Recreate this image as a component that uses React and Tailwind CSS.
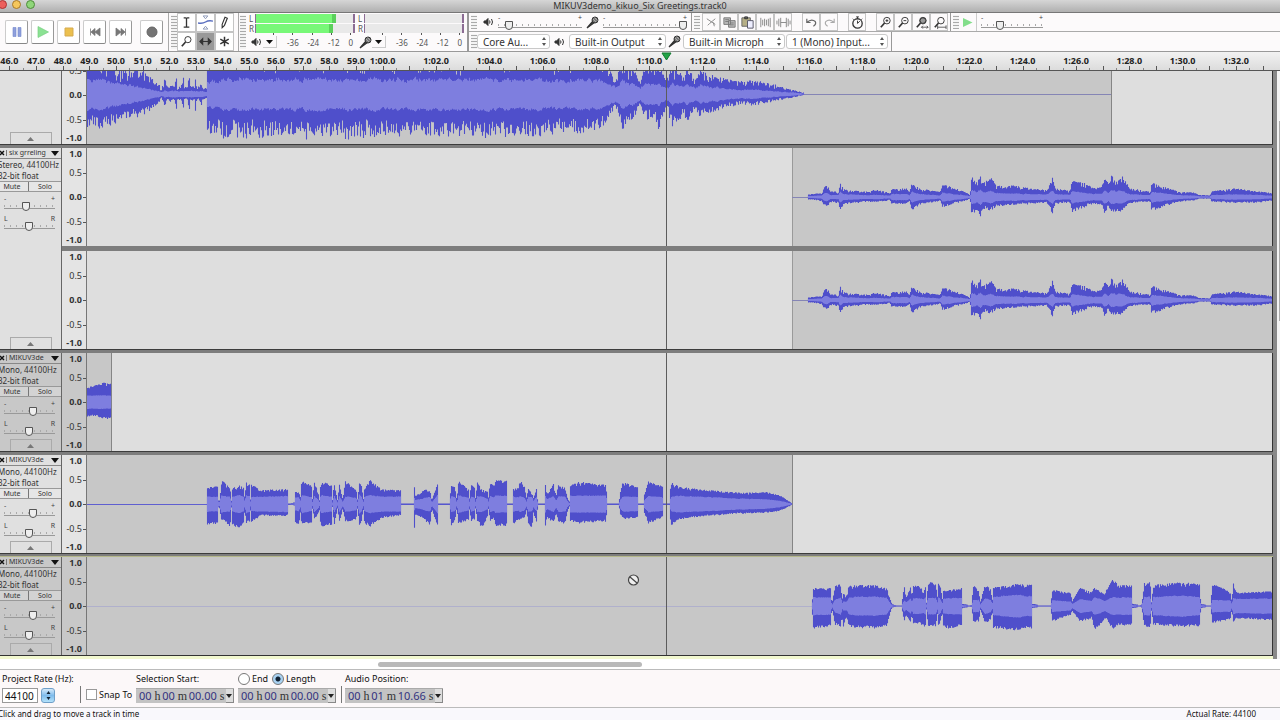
import React, { useState } from 'react';

const PLAYHEAD = 579;

// [x, peak above zero, peak below zero, rms], all in thirds of a pixel
const MUSIC = [
  [84, 8, 8], [125, 12, 14], [132, 30, 30], [142, 36, 36], [150, 17, 17], [175, 17, 20], [180, 46, 46],
  [190, 25, 27], [210, 20, 20], [270, 16, 17], [285, 24, 17], [330, 12, 12], [335, 24, 24], [380, 27, 25],
  [388, 16, 14], [395, 40, 45], [420, 26, 25], [480, 15, 14], [487, 40, 33], [510, 32, 26], [560, 13, 11],
  [570, 6, 6], [575, 63, 63], [590, 43, 47], [601, 63, 62], [610, 42, 38], [632, 60, 46], [650, 34, 32],
  [700, 35, 27], [760, 25, 22], [800, 22, 20], [817, 58, 56], [825, 27, 25], [870, 19, 17], [875, 48, 52],
  [910, 44, 36], [940, 27, 22], [965, 30, 27], [972, 63, 58], [985, 40, 34], [995, 68, 52], [1010, 50, 50],
  [1027, 62, 46], [1050, 27, 21], [1110, 17, 15], [1115, 44, 47], [1160, 28, 28], [1200, 16, 16],
  [1240, 14, 12], [1260, 6, 6], [1290, 5, 5], [1295, 17, 17], [1365, 27, 20], [1430, 17, 19], [1478, 13, 13],
];

const VOCAL_A = [
  [20, 5, 5], [22, 50, 65, 25], [52, 54, 65, 24], [54, 10, 10, 8], [60, 12, 15], [62, 62, 52, 30],
  [66, 72, 50], [90, 47, 73, 25], [94, 10, 12], [97, 47, 67], [118, 58, 77, 30], [130, 50, 62],
  [134, 15, 20], [138, 69, 60, 30], [148, 59, 54], [151, 15, 20], [154, 60, 57, 22], [180, 42, 38, 25],
  [262, 45, 38, 27], [264, 0, 0], [283, 5, 5], [285, 37, 60, 20], [297, 40, 70], [300, 12, 20],
  [305, 72, 65, 30], [335, 54, 60, 22], [337, 15, 15], [343, 70, 49], [355, 30, 30], [358, 12, 20],
  [362, 70, 75, 30], [395, 56, 66, 25], [397, 12, 10], [402, 62, 70], [412, 12, 15], [418, 59, 60],
  [428, 15, 15], [436, 70, 54, 25], [468, 44, 54], [472, 15, 15], [478, 65, 70, 30], [486, 50, 50],
  [489, 5, 5], [493, 45, 60], [510, 72, 72, 30], [545, 44, 44, 25], [601, 42, 37, 25], [603, 0, 0],
  [640, 0, 0], [643, 52, 77, 20], [646, 25, 35], [675, 44, 50], [690, 39, 71], [695, 12, 15],
  [712, 60, 71], [714, 0, 0], [749, 0, 0], [752, 54, 71], [765, 52, 55], [770, 10, 10], [775, 70, 65],
  [805, 44, 49], [809, 8, 8], [812, 60, 55], [823, 49, 49], [825, 10, 10], [832, 65, 54], [845, 44, 76],
  [862, 38, 44], [864, 10, 10], [870, 65, 54], [882, 54, 44], [886, 72, 70, 28], [920, 70, 70, 28],
  [922, 0, 0], [937, 0, 0], [940, 49, 65], [955, 49, 49], [960, 73, 49], [975, 49, 44], [978, 15, 15],
  [985, 49, 65], [996, 30, 75], [1000, 20, 30], [1010, 48, 60], [1013, 0, 0], [1033, 0, 0],
  [1035, 65, 75], [1040, 30, 42], [1060, 60, 60], [1068, 25, 30], [1075, 60, 54], [1095, 48, 65],
  [1103, 15, 20], [1108, 8, 8], [1110, 55, 55, 28], [1135, 68, 61, 28], [1218, 57, 55, 28], [1221, 0, 0],
  [1257, 0, 0], [1259, 30, 30], [1268, 68, 48, 25], [1312, 51, 44, 24], [1314, 0, 0], [1331, 0, 0],
  [1333, 30, 30], [1345, 68, 62, 27], [1387, 53, 42, 22], [1389, 0, 0], [1408, 0, 0], [1412, 67, 68, 25],
  [1440, 52, 50, 28], [1500, 44, 39, 24], [1620, 34, 30, 18], [1700, 36, 28, 16], [1740, 26, 22], [1775, 3, 3],
];

const VOCAL_B = [
  [66, 5, 5], [69, 54, 73, 30], [122, 54, 65, 28], [125, 5, 5], [135, 60, 60, 22], [153, 67, 65],
  [156, 10, 15], [158, 42, 75, 15], [168, 30, 35], [172, 40, 45], [176, 62, 65, 28], [250, 64, 72, 33],
  [290, 54, 64, 28], [302, 15, 15], [306, 6, 6], [320, 1, 1], [334, 0, 0], [342, 65, 50, 20],
  [348, 25, 30], [362, 60, 55], [365, 30, 30], [370, 60, 55], [390, 62, 55], [400, 40, 65], [407, 65, 65],
  [409, 12, 12], [414, 73, 65, 28], [438, 67, 65, 28], [441, 15, 15], [445, 67, 65], [453, 54, 44],
  [456, 8, 8], [459, 46, 70, 25], [515, 54, 66, 28], [517, 7, 7], [532, 4, 4], [534, 0, 0], [544, 3, 3],
  [550, 63, 50, 20], [567, 44, 50], [570, 10, 10], [585, 65, 53], [603, 49, 44], [606, 8, 8],
  [610, 56, 70, 30], [675, 66, 78, 38], [724, 64, 69, 32], [727, 7, 7], [742, 4, 4], [745, 0, 0],
  [783, 0, 0], [785, 50, 50, 20], [842, 39, 28], [846, 15, 15], [870, 55, 50], [905, 42, 39],
  [912, 55, 75], [930, 44, 60], [945, 34, 39], [950, 54, 44], [968, 80, 75, 30], [985, 66, 60],
  [1024, 62, 62, 30], [1027, 7, 7], [1043, 4, 4], [1046, 0, 0], [1055, 5, 5], [1062, 70, 65, 30],
  [1080, 75, 70], [1084, 12, 15], [1090, 64, 59, 30], [1175, 72, 66, 35], [1228, 66, 64, 30],
  [1232, 7, 7], [1247, 4, 4], [1250, 0, 0], [1263, 0, 0], [1265, 67, 54, 20], [1320, 44, 44],
  [1325, 15, 15], [1330, 70, 50], [1340, 40, 40, 24], [1448, 45, 45, 25],
];

const NOTE = [[0, 44, 46, 22], [30, 52, 46, 22], [45, 60, 52, 22], [60, 56, 56, 22], [72, 55, 48, 22]];

const MIX = [
  [0, 105, 115, 60], [50, 95, 125, 58], [85, 85, 100, 48], [110, 75, 85, 40], [140, 70, 70, 28],
  [165, 75, 85, 30], [190, 50, 56, 20], [218, 28, 32, 12], [222, 8, 10, 8], [232, 50, 40, 14],
  [240, 26, 28, 12], [264, 24, 24, 12], [267, 70, 76, 12], [270, 22, 24, 12], [285, 28, 24, 12],
  [288, 70, 78, 12], [291, 22, 20, 12], [303, 26, 24, 12], [306, 70, 76, 12], [309, 24, 22, 12],
  [322, 24, 24, 12], [325, 68, 74, 12], [328, 24, 24, 12], [339, 24, 22, 12], [342, 60, 66, 12],
  [345, 24, 22, 12], [358, 16, 18, 9], [360, 110, 142, 52], [420, 112, 144, 60], [800, 108, 150, 60],
  [1000, 112, 140, 60], [1300, 112, 150, 60], [1500, 108, 130, 56], [1555, 100, 105, 48],
  [1585, 36, 46, 30], [1602, 92, 115, 50], [1640, 80, 84, 42], [1660, 36, 40, 24], [1676, 94, 96, 46],
  [1705, 80, 80, 40], [1716, 94, 146, 44], [1736, 40, 40, 20], [1756, 94, 115, 40], [1790, 54, 68, 30],
  [1800, 88, 100, 40], [1824, 42, 52, 26], [1840, 70, 78, 34], [1900, 50, 50, 24], [1950, 38, 38, 18],
  [2010, 42, 38, 18], [2060, 30, 27, 12], [2100, 17, 17, 8], [2150, 4, 4, 2],
];

function envelopeAt(points, x) {
  for (let i = 1; i < points.length; i++) {
    const a = points[i - 1];
    const b = points[i];
    if (x >= a[0] && x < b[0]) {
      const t = (x - a[0]) / (b[0] - a[0]);
      const rms = (p) => (p[3] === undefined ? (p[1] + p[2]) * 0.22 : p[3]);
      return [a[1] + (b[1] - a[1]) * t, a[2] + (b[2] - a[2]) * t, rms(a) + (rms(b) - rms(a)) * t];
    }
  }
  return null;
}

function buildWave(points, offset, zero, jitter) {
  let seed = 7;
  const random = () => {
    seed = (seed * 16807) % 2147483647;
    return seed / 2147483647;
  };
  let peaks = '';
  let rms = '';
  let swell = 0.5;
  const last = points[points.length - 1][0] / 3;
  for (let px = Math.floor(points[0][0] / 3); px < last; px++) {
    const env = envelopeAt(points, px * 3 + 1);
    if (!env) continue;
    swell = swell * 0.65 + random() * 0.35;
    const up = Math.max(0.5, (env[0] / 3) * (1 - jitter * random() * random()));
    const down = Math.max(0.5, (env[1] / 3) * (1 - jitter * (random() * 0.6 + swell * 0.4)));
    const mid = (env[2] / 3) * (1 - jitter * swell * 0.8);
    const midUp = Math.min(mid * (1 - jitter * 0.3 * random()), up);
    const midDown = Math.min(mid, down);
    const x = px + offset + 0.5;
    peaks += `M${x} ${(zero - up).toFixed(1)}V${(zero + down).toFixed(1)}`;
    rms += `M${x} ${(zero - midUp).toFixed(1)}V${(zero + midDown).toFixed(1)}`;
  }
  return { peaks, rms };
}

function Waveform({ points, offset = 0, zero = 49, jitter = 0.2, clip, line, lineColor = '#5f5fd0', children }) {
  const wave = buildWave(points, offset, zero, jitter);
  const [start, end] = clip;
  return (
    <svg className="block h-full w-full bg-[#dedede]" aria-hidden="true">
      <rect x={start} y="0" width={end ? end - start : '100%'} height="100%" fill="#c7c7c7" />
      {start > 0 && <path d={`M${start + 0.5} 0V98`} stroke="#9a9a9a" />}
      {end && <path d={`M${end + 0.5} 0V98`} stroke="#858585" />}
      {line && <path d={`M${line[0]} ${zero + 0.5}H${line[1]}`} stroke={lineColor} />}
      <path d={wave.peaks} stroke="#4f4fcb" strokeWidth="1.1" />
      <path d={wave.rms} stroke="#7e7edf" strokeWidth="1.1" />
      <path d={`M${PLAYHEAD + 0.5} 0V98`} stroke="#5c5c5c" />
      {children}
    </svg>
  );
}

const scale = [
  { text: '1.0', style: 'font-bold' },
  { text: '0.5', tick: true, style: 'mt-[7px]' },
  { text: '0.0', tick: true, style: 'mt-3 font-bold' },
  { text: '-0.5', tick: true, style: 'mt-[13px]' },
  { text: '-1.0', style: 'mt-1.5 font-bold' },
];

function VerticalRuler({ dark }) {
  return (
    <div className={`flex w-[25px] shrink-0 flex-col justify-end overflow-hidden border-r border-[#777] text-[9px] leading-3 text-[#333] ${dark ? 'bg-[#c8c8c8]' : 'bg-[#e4e4e4]'}`}>
      {scale.map((mark) => (
        <div key={mark.text} className={`flex h-3 shrink-0 items-center justify-end gap-px ${mark.style}`}>
          <span>{mark.text}</span>
          <span className={`h-px w-[3px] ${mark.tick ? 'bg-[#555]' : ''}`} />
        </div>
      ))}
    </div>
  );
}

function Slider({ label, value, left = '-', right = '+', className = '' }) {
  return (
    <label className={`block ${className}`}>
      <span className="flex h-1.5 justify-between text-[7px] leading-[6px] text-[#444]">
        <span>{left}</span>
        <span>{right}</span>
      </span>
      <input
        type="range"
        aria-label={label}
        defaultValue={value}
        className="block h-[9px] w-full appearance-none bg-[linear-gradient(#999,#999),repeating-linear-gradient(90deg,#aaa_0_1px,transparent_1px_6px)] bg-[length:100%_1px,100%_2px] bg-[position:0_6px,0_3px] bg-no-repeat [&::-webkit-slider-thumb]:h-[9px] [&::-webkit-slider-thumb]:w-2 [&::-webkit-slider-thumb]:appearance-none [&::-webkit-slider-thumb]:rounded-t-[3px] [&::-webkit-slider-thumb]:rounded-b-full [&::-webkit-slider-thumb]:border [&::-webkit-slider-thumb]:border-[#555] [&::-webkit-slider-thumb]:bg-[#eee]"
      />
    </label>
  );
}

function TrackPanel({ name, format, gain, dark }) {
  return (
    <div className={`flex w-[62px] shrink-0 flex-col overflow-hidden border-r border-[#666] text-[8px] text-[#333] ${dark ? 'bg-[#c8c8c8]' : 'bg-[#e0e0e0]'}`}>
      {name && (
        <>
          <div className="flex h-[11px] shrink-0 items-center border-b border-[#888] text-[7px] leading-[10px]">
            <button aria-label="Close track" className="w-[7px] shrink-0 border-r border-[#777] text-left text-[#111]">
              <svg width="5" height="6" viewBox="0 0 5 6" stroke="currentColor" strokeWidth="1.4">
                <path d="M0 1l4 4M4 1L0 5" />
              </svg>
            </button>
            <button className="flex min-w-0 flex-1 items-center justify-between pr-0.5 pl-0.5 whitespace-nowrap">
              {name}
              <svg width="8" height="5" viewBox="0 0 8 5"><path d="M0 0h8L4 5z" fill="#111" /></svg>
            </button>
          </div>
          <div className="-ml-0.5 shrink-0 leading-[11px] whitespace-nowrap">
            <p>{format}, 44100Hz</p>
            <p>32-bit float</p>
          </div>
          <div className="flex h-[11px] shrink-0 border-y border-[#999] bg-white/20 text-[7px] leading-[9px]">
            <button className="w-[29px] border-r border-[#777] pr-1">Mute</button>
            <button className="flex-1">Solo</button>
          </div>
          <Slider label={`${name} gain`} value={gain} className="mt-1 mr-1.5 ml-1" />
          <Slider label={`${name} pan`} value={48} left="L" right="R" className="mt-[5px] mr-1.5 ml-1" />
        </>
      )}
      <button aria-label="Collapse track" className="mx-auto mt-auto flex h-3 w-[42px] shrink-0 items-center justify-center border border-b-0 border-[#aaa]">
        <svg width="7" height="4" viewBox="0 0 7 4"><path d="M0 4h7L3.500 0z" fill="#777" /></svg>
      </button>
    </div>
  );
}

function Track({ name, format, gain, dark, height = 'h-[98px]', focused, children }) {
  const channels = React.Children.toArray(children);
  return (
    <section className={`border-b-4 ${focused ? 'border-[#f2f8cf]' : 'border-[#7d7d7d]'}`}>
      <div className={`flex ${focused ? 'shadow-[0_-1px_0_#b5b88a,0_1px_0_#333]' : 'shadow-[0_1px_0_#3c3c3c]'}`}>
        <TrackPanel name={name} format={format} gain={gain} dark={dark} />
        <div className="min-w-0 flex-1">
          {channels.map((channel, i) => (
            <div key={i} className={`flex ${height} ${i > 0 ? 'box-content border-t-[5px] border-[#7d7d7d]' : ''}`}>
              <VerticalRuler dark={dark} />
              <div className="min-w-0 flex-1 border-r border-[#333]">{channel}</div>
            </div>
          ))}
        </div>
      </div>
    </section>
  );
}

function TimeRuler() {
  const seconds = Array.from({ length: 48 }, (_, i) => 46 + i);
  const label = (s) => {
    if (s < 60) return `${s}.0`;
    return s % 2 === 0 ? `1:${String(s - 60).padStart(2, '0')}.0` : '';
  };
  return (
    <div className="relative h-[19px] overflow-hidden border-b border-[#555] bg-gradient-to-b from-[#f2f2f2] to-[#dcdcdc]">
      <div className="mr-1 -ml-1 grid h-[18px] grid-cols-48 text-[9px] font-bold text-[#222]">
        {seconds.map((s) => (
          <div key={s} className="flex flex-col">
            <div className="flex h-3.5 justify-center pt-[3px] leading-[11px]">
              <span className="shrink-0">{label(s)}</span>
            </div>
            <div className="flex h-1 items-end">
              <div className="h-0.5 flex-1 border-l border-[#888]" />
              <div className="h-1 flex-1 border-l border-[#555]" />
            </div>
          </div>
        ))}
      </div>
      <svg className="absolute top-0 left-[661px]" width="11" height="9" viewBox="0 0 11 9">
        <path d="M1 1h9L5.500 8z" fill="#22a347" stroke="#117a30" />
      </svg>
    </div>
  );
}

function Grip() {
  return <div className="w-1.5 shrink-0 self-stretch bg-[repeating-linear-gradient(#aaa_0_1px,#f4f4f4_1px_3px)] bg-clip-content py-0.5" />;
}

function Speaker() {
  return (
    <svg className="shrink-0" width="11" height="10" viewBox="0 0 11 10" fill="none" stroke="#333">
      <path d="M1 4h1.500L5 1.500v7L2.500 6H1z" fill="#333" />
      <path d="M6.500 3.500q1 1.500 0 3M8.500 2q2 3 0 6" />
    </svg>
  );
}

function Microphone() {
  return (
    <svg className="shrink-0" width="13" height="13" viewBox="0 0 13 13">
      <path d="M1 12l6-7 1.500 1.500z" fill="#333" stroke="#333" strokeWidth="1.2" />
      <circle cx="9" cy="4" r="3" fill="#777" stroke="#333" />
      <path d="M7 3l3 3M8.500 1.500l3 3" stroke="#ccc" strokeWidth=".6" />
    </svg>
  );
}

const transport = [
  { label: 'Pause', icon: <path d="M4 3.500h3v9H4zM9 3.500h3v9H9z" fill="#8fa0dc" stroke="#7388cc" strokeWidth=".6" /> },
  { label: 'Play', icon: <path d="M3 2.500l10.500 5.500L3 13.500z" fill="#8be293" stroke="#79cf83" strokeWidth=".7" /> },
  { label: 'Stop', icon: <path d="M4 4h8v8H4z" fill="#ecc04e" stroke="#d5ab50" /> },
  { label: 'Skip to start', icon: <path d="M3.500 4.500v7M8 4.500v7L4 8zM13 4v8L8 8z" fill="#777" stroke="#777" strokeWidth=".8" /> },
  { label: 'Skip to end', icon: <path d="M12.500 4.500v7M8 4.500v7L12 8zM3 4v8l5-4z" fill="#777" stroke="#777" strokeWidth=".8" /> },
  { label: 'Record', icon: <circle cx="8" cy="8" r="5" fill="#747474" stroke="#666" /> },
];

const tools = [
  { label: 'Selection', icon: <path d="M5 3h2q1 0 1 1v8q0 1-1 1H5M11 3H9q-1 0-1 1v8q0 1 1 1h2" strokeWidth="1.400" /> },
  { label: 'Envelope', icon: <><path d="M0 8.500q5 1 8-1t8-1" stroke="#5a6fc0" strokeWidth="1.500" /><path d="M5.500 1h5L8 4zM5.500 15h5L8 12z" stroke="#8a95b5" /></> },
  { label: 'Draw', icon: <path d="M5.500 10l3-7.500 2.500 1-3 7.500-2.500 2.500z" strokeWidth="1.200" /> },
  { label: 'Zoom', icon: <><circle cx="9.500" cy="6" r="3.300" /><path d="M7 8.500L3 13" strokeWidth="1.800" /></> },
  { label: 'Time shift', active: true, icon: <path d="M2 8h12M5 5L2 8l3 3zM11 5l3 3-3 3z" fill="#222" strokeWidth="1.200" /> },
  { label: 'Multi', icon: <path d="M8 3v10M3.500 5.500l9 5M12.500 5.500l-9 5" strokeWidth="1.600" /> },
];

const zoomGlass = <><circle cx="9.500" cy="6" r="3.500" /><path d="M7 8.500L3 13" strokeWidth="1.800" /></>;

const editGroups = [
  [
    { label: 'Cut', icon: <path d="M3 4l9 6M12 4l-6 5M4 11l2-2M10 8l1 4" stroke="#888" /> },
    { label: 'Copy', icon: <path d="M2 3h7v7H2zM7 6h7v7H7zM3.500 5h4M3.500 7h4M8.500 8.500h4M8.500 10.500h4" fill="#bbb" stroke="#777" /> },
    { label: 'Paste', icon: <><path d="M2 3h9v9H2z" fill="#b5ae86" stroke="#666" /><path d="M5 2h3v2H5z" fill="#666" /><path d="M8 6h6v8H8z" fill="#eef" stroke="#556" /></> },
    { label: 'Trim', icon: <path d="M3 3v10M13 3v10M5 5v6M7 4v8M9 5v6M11 4v8" stroke="#888" /> },
    { label: 'Silence', icon: <path d="M1 6v4M3 4v8M5 3v10M11 3v10M13 4v8M15 6v4M5 8h6" stroke="#888" /> },
  ],
  [
    { label: 'Undo', icon: <path d="M3 4v4h4M3 8q5-4.500 9-1 1.500 3-2 5" stroke="#666" strokeWidth="1.300" /> },
    { label: 'Redo', icon: <path d="M13 4v4H9M13 8Q8 3.500 4 7q-1.500 3 2 5" stroke="#aaa" strokeWidth="1.200" /> },
  ],
  [{ label: 'Sync-lock', icon: <><circle cx="8" cy="9" r="5" strokeWidth="1.400" /><path d="M8 9l2.500-2.500M8 9V6M6.500 2h3M8 2v2M3 4l1 1M13 4l-1 1" /></> }],
  [
    { label: 'Zoom in', icon: <>{zoomGlass}<path d="M8 6h3M9.500 4.500v3" /></> },
    { label: 'Zoom out', icon: <>{zoomGlass}<path d="M8 6h3" /></> },
    { label: 'Fit selection', icon: <>{zoomGlass}<circle cx="9.500" cy="6" r="3" fill="#999" /><path d="M8 13h7M9.500 11.500L8 13l1.500 1.500M13.500 11.500L15 13l-1.500 1.500" strokeWidth=".8" /></> },
    { label: 'Fit project', icon: <>{zoomGlass}<path d="M6 13h9M6 11v4M15 11v4" strokeWidth=".8" /></> },
  ],
];

function ToolButton({ tool, className = '' }) {
  return (
    <button aria-label={tool.label} className={`flex shrink-0 items-center justify-center border border-[#c4c4c4] ${className}`}>
      <svg width="15" height="15" viewBox="0 0 16 16" fill="none" stroke="#333">{tool.icon}</svg>
    </button>
  );
}

function Meter({ icon, levels, label }) {
  return (
    <div className="w-[106px] text-[8px] leading-[9px] text-[#555]">
      {levels.map((level, i) => (
        <div key={i} className="mt-px flex h-[9px] items-stretch">
          <span className="w-1.5">{i === 0 ? 'L' : 'R'}</span>
          <div className="flex flex-1 border-r-2 border-l border-[#8c6c94] bg-[#e9e9e9]">
            {level > 0 && <div className="border-r-4 border-[#5bd05b] bg-[#78f878]" style={{ width: `${level}%` }} />}
          </div>
        </div>
      ))}
      <div className="mr-1 ml-6 flex h-0.5 justify-between">
        {[0, 1, 2, 3, 4].map((tick) => (
          <span key={tick} className="w-px bg-[#555]" />
        ))}
      </div>
      <div className="flex h-3.5 items-center">
        <span className="flex w-3.5 justify-center">{icon}</span>
        <button aria-label={`${label} menu`} className="flex h-3 w-3.5 items-center justify-center border-r border-b border-[#ccc]">
          <svg width="7" height="4" viewBox="0 0 7 4"><path d="M0 0h7L3.500 4z" fill="#111" /></svg>
        </button>
        <div className="flex flex-1 justify-between pr-0.5 pl-2.5">
          <span>-36</span>
          <span>-24</span>
          <span>-12</span>
          <span>0</span>
        </div>
      </div>
    </div>
  );
}

function DeviceSelect({ label, text, className }) {
  return (
    <div className={`relative h-[15px] shrink-0 ${className}`}>
      <select aria-label={label} className="block h-full w-full appearance-none rounded-[3px] border border-[#c9c9c9] bg-white pl-[5px] text-[10px] leading-3 text-[#333]">
        <option>{text}</option>
      </select>
      <svg className="pointer-events-none absolute top-[3px] right-1" width="4" height="9" viewBox="0 0 4 9" fill="#555">
        <path d="M0 3h4L2 0zM0 6h4L2 9z" />
      </svg>
    </div>
  );
}

function Toolbars() {
  return (
    <div className="flex h-[39px] overflow-hidden border-b border-[#999] bg-[#fcfafb]">
      <div className="flex w-[169px] shrink-0 items-center gap-[3px] border-r border-[#aaa] pl-[5px]">
        {transport.map((button) => (
          <button
            key={button.label}
            aria-label={button.label}
            className={`flex h-6 w-[23px] items-center justify-center rounded-[2px] border border-[#ccc] border-r-[#999] border-b-[#888] bg-white ${button.label === 'Record' ? 'ml-[5px]' : ''}`}
          >
            <svg width="16" height="16" viewBox="0 0 16 16">{button.icon}</svg>
          </button>
        ))}
      </div>
      <div className="flex w-[70px] shrink-0 border-r border-[#aaa] pl-0.5">
        <Grip />
        <div className="grid grid-cols-3 grid-rows-2">
          {tools.map((tool) => (
            <ToolButton key={tool.label} tool={tool} className={`w-[19px] ${tool.active ? 'bg-[#999]' : 'bg-white'}`} />
          ))}
        </div>
      </div>
      <div className="flex w-[230px] shrink-0 gap-[3px] border-r-2 border-[#999] pl-px">
        <Grip />
        <Meter label="Output level" icon={<Speaker />} levels={[82, 79]} />
        <Meter label="Input level" icon={<Microphone />} levels={[0, 0]} />
      </div>
      <div className="min-w-0 flex-1">
        <div className="flex h-[19px] items-center border-b border-[#aaa] pl-0.5">
          <Grip />
          <span className="ml-1.5"><Speaker /></span>
          <Slider label="Output volume" value={9} className="ml-1 w-[84px]" />
          <span className="ml-1"><Microphone /></span>
          <Slider label="Input volume" value={100} className="ml-1 w-[84px]" />
          <div className="ml-1 flex h-full items-stretch border-l border-[#999] pl-0.5">
            <Grip />
            <div className="ml-0.5 flex gap-[10px]">
              {editGroups.map((group, i) => (
                <div key={i} className="flex">
                  {group.map((tool) => (
                    <ToolButton key={tool.label} tool={tool} className="w-[18px]" />
                  ))}
                </div>
              ))}
            </div>
            <span className="ml-0.5 flex border-l border-[#999] pl-0.5"><Grip /></span>
          </div>
          <button aria-label="Play at speed" className="flex h-full w-[18px] shrink-0 items-center justify-center border-r border-[#ccc]">
            <svg width="11" height="11" viewBox="0 0 11 11"><path d="M1 1l9.500 4.500L1 10z" fill="#83de8b" /></svg>
          </button>
          <Slider label="Playback speed" value={28} className="ml-1 w-[62px]" />
        </div>
        <div className="flex h-[19px] items-center pl-0.5">
          <Grip />
          <DeviceSelect label="Audio host" text="Core Au..." className="w-[73px]" />
          <span className="mx-1"><Speaker /></span>
          <DeviceSelect label="Output device" text="Built-in Output" className="w-[97px]" />
          <span className="mx-0.5"><Microphone /></span>
          <DeviceSelect label="Input device" text="Built-in Microph" className="w-[102px]" />
          <DeviceSelect label="Input channels" text="1 (Mono) Input..." className="ml-px w-[102px]" />
          <div className="ml-[3px] h-full border-l border-[#999]" />
        </div>
      </div>
    </div>
  );
}

function TimeField({ label, parts }) {
  return (
    <div role="group" aria-label={label} className="flex h-[15px] w-[98px] items-center justify-between border-t border-[#aaa] bg-[#c3c3c3] pl-[3px] font-['Liberation_Serif',serif] text-[12px] text-[#333]">
      {parts.map(([value, unit]) => (
        <span key={unit} className="flex gap-[3px]">
          <span className="font-['Noto_Sans',sans-serif] text-[11px] leading-[14px] text-[#33337f]">{value}</span>
          <span className="leading-[14px]">{unit}</span>
        </span>
      ))}
      <button aria-label={`${label} format`} className="flex h-full w-2 items-center justify-center border-r border-b border-[#888] bg-[#ddd]">
        <svg width="6" height="4" viewBox="0 0 6 4"><path d="M0 0h6L3 4z" fill="#222" /></svg>
      </button>
    </div>
  );
}

function SelectionBar() {
  const [mode, setMode] = useState('length');
  return (
    <div className="flex h-[39px] border-y border-[#bbb] bg-[#fcf8f9] text-[9px] leading-3 text-[#111]">
      <div className="w-20 shrink-0 pt-[3px] pl-0.5">
        <label htmlFor="rate" className="block whitespace-nowrap">Project Rate (Hz):</label>
        <div className="mt-[3px] flex gap-[3px]">
          <input id="rate" defaultValue="44100" className="h-[15px] w-9 border border-[#999] bg-white px-0.5 text-[10px]" />
          <button aria-label="Choose rate" className="flex h-[15px] w-3.5 items-center justify-center rounded-[3px] border border-[#6f9fc8] bg-gradient-to-b from-[#d5eafa] via-[#7fbcec] to-[#b4e2fa]">
            <svg width="5" height="9" viewBox="0 0 5 9" fill="#123"><path d="M.5 3h4l-2-3zM.5 6h4l-2 3z" /></svg>
          </button>
        </div>
      </div>
      <label className="mt-4 mb-1 flex w-14 shrink-0 items-center gap-0.5 border-l border-[#777] pl-[5px] whitespace-nowrap">
        <input type="checkbox" className="size-[11px] shrink-0 appearance-none border border-[#999] bg-white" />
        Snap To
      </label>
      <div className="w-[102px] shrink-0 pt-[3px]">
        <p className="mb-[3px]">Selection Start:</p>
        <TimeField label="Selection start" parts={[['00', 'h'], ['00', 'm'], ['00.00', 's']]} />
      </div>
      <div className="w-[103px] shrink-0 pt-[3px]">
        <div className="mb-[3px] flex h-3 items-center gap-1">
          {[['end', 'End'], ['length', 'Length']].map(([value, text]) => (
            <label key={value} className="flex items-center gap-0.5">
              <input
                type="radio"
                name="mode"
                checked={mode === value}
                onChange={() => setMode(value)}
                className="size-3 appearance-none rounded-full border border-[#777] bg-white checked:bg-[radial-gradient(#123_0_2px,#a9d2f2_3px)]"
              />
              {text}
            </label>
          ))}
        </div>
        <TimeField label="Selection length" parts={[['00', 'h'], ['00', 'm'], ['00.00', 's']]} />
      </div>
      <div className="mt-4 mb-1 w-1 shrink-0 border-l border-[#777]" />
      <div className="shrink-0 pt-[3px]">
        <p className="mb-[3px]">Audio Position:</p>
        <TimeField label="Audio position" parts={[['00', 'h'], ['01', 'm'], ['10.66', 's']]} />
      </div>
    </div>
  );
}

export default function App() {
  return (
    <div className="flex min-h-screen flex-col overflow-hidden bg-[#f9f8fc] font-['Noto_Sans',sans-serif]">
      <header className="relative flex h-[13px] items-center justify-center border-b border-[#777] bg-gradient-to-b from-[#d6d6d6] to-[#b0b0b0]">
        <div className="absolute top-0 -left-0.5 flex gap-[5px]">
          <button aria-label="Close" className="size-[9px] rounded-full border border-[#a33] bg-[#ec5f5c]" />
          <button aria-label="Minimize" className="size-[9px] rounded-full border border-[#a7792b] bg-[#f5c75d]" />
          <button aria-label="Zoom" className="size-[9px] rounded-full border border-[#4e8a3b] bg-[#8fd67a]" />
        </div>
        <h1 className="text-[9px] leading-3 text-[#333]">MIKUV3demo_kikuo_Six Greetings.track0</h1>
      </header>
      <Toolbars />
      <TimeRuler />
      <main className="flex">
        <div className="min-w-0 flex-1 border-r-4 border-[#888]">
          <Track height="h-[73px]">
            <Waveform points={MIX} zero={23} jitter={0.55} clip={[0, 1024]} line={[715, 1024]} lineColor="#8585b5" />
          </Track>
          <Track name="six grreling" format="Stereo" gain={42}>
            <Waveform points={MUSIC} offset={693} jitter={0.4} clip={[705, null]} line={[705, 722]} lineColor="#8585b5" />
            <Waveform points={MUSIC} offset={693} jitter={0.4} clip={[705, null]} line={[705, 722]} lineColor="#8585b5" />
          </Track>
          <Track name="MIKUV3de" format="Mono" gain={58} dark>
            <Waveform points={NOTE} clip={[0, 24]} />
          </Track>
          <Track name="MIKUV3de" format="Mono" gain={58}>
            <Waveform points={VOCAL_A} offset={113} clip={[0, 705]} line={[0, 705]} />
          </Track>
          <Track name="MIKUV3de" format="Mono" gain={58} dark focused>
            <Waveform points={VOCAL_B} offset={703} clip={[0, null]} line={[0, 1186]} lineColor="#b0b0cc">
              <g fill="#eee" stroke="#444" strokeWidth="1.200">
                <circle cx="546.500" cy="23" r="5" />
                <path d="M543 20l7 6" />
              </g>
            </Waveform>
          </Track>
        </div>
        <div className="w-[3px] shrink-0 bg-[#f4f4f4]">
          <div className="mt-[50px] ml-0.5 h-[200px] bg-[#aaa]" />
        </div>
      </main>
      <div className="flex h-2.5 items-center bg-white">
        <div className="ml-[378px] h-[5px] w-[264px] rounded-full bg-[#b9b9b9]" />
      </div>
      <SelectionBar />
      <footer className="flex h-3 items-center justify-between pr-6 text-[8px] leading-3 text-[#111]">
        <span className="-ml-0.5">Click and drag to move a track in time</span>
        <span>Actual Rate: 44100</span>
      </footer>
    </div>
  );
}
